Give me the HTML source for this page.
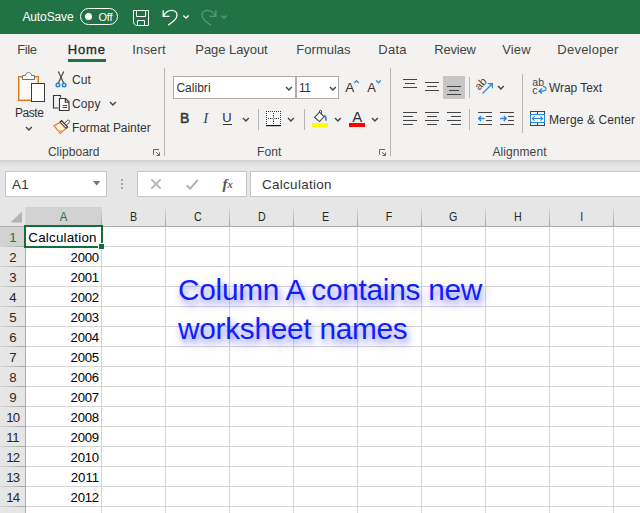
<!DOCTYPE html>
<html><head><meta charset="utf-8"><title>Excel</title>
<style>
*{box-sizing:border-box;margin:0;padding:0}
html,body{width:640px;height:513px;overflow:hidden;background:#fff}
body{position:relative;font-family:"Liberation Sans",sans-serif;color:#262626}
.abs{position:absolute}
.t{position:absolute;white-space:nowrap;line-height:1;height:1em}
.big{text-shadow:2px 4px 6px rgba(100,100,255,.55),2px 6px 9px rgba(120,120,255,.38)}
.vsep{position:absolute;width:1px;background:#b7b5b3}
.box{position:absolute;background:#fff;border:1px solid #c6c6c6}
svg{position:absolute;overflow:visible}

#title{left:0;top:0;width:640px;height:34px;background:#217346}
#ribbon{left:0;top:34px;width:640px;height:126px;background:#f3f2f1}
#shadow{left:0;top:160px;width:640px;height:7px;background:linear-gradient(#cfcfcf,#dedede 45%,#e6e6e6)}
#fbar{left:0;top:167px;width:640px;height:40px;background:#e6e6e6}
#colhdr{left:0;top:207px;width:640px;height:19px;background:#e6e6e6}
#rowhdr{left:0;top:226px;width:25px;height:287px;background:#e6e6e6}
.gl{position:absolute;background:#d4d4d4}
.hl{position:absolute;background:#ababab}

</style></head><body>
<div id="title" class="abs"></div><div id="ribbon" class="abs"></div><div id="shadow" class="abs"></div><div id="fbar" class="abs"></div>
<div id="colhdr" class="abs"></div><div id="rowhdr" class="abs"></div>
<div class="abs" style="left:26px;top:207px;width:75px;height:18px;background:#d2d2d2"></div>
<div class="abs" style="left:0;top:227px;width:24px;height:19px;background:#d2d2d2"></div>
<div class="gl" style="left:101px;top:227px;width:1px;height:286px"></div>
<div class="abs" style="left:101px;top:207px;width:1px;height:19px;background:linear-gradient(#dcdcdc,#a2a2a2)"></div>
<div class="gl" style="left:165px;top:227px;width:1px;height:286px"></div>
<div class="abs" style="left:165px;top:207px;width:1px;height:19px;background:linear-gradient(#dcdcdc,#a2a2a2)"></div>
<div class="gl" style="left:229px;top:227px;width:1px;height:286px"></div>
<div class="abs" style="left:229px;top:207px;width:1px;height:19px;background:linear-gradient(#dcdcdc,#a2a2a2)"></div>
<div class="gl" style="left:293px;top:227px;width:1px;height:286px"></div>
<div class="abs" style="left:293px;top:207px;width:1px;height:19px;background:linear-gradient(#dcdcdc,#a2a2a2)"></div>
<div class="gl" style="left:357px;top:227px;width:1px;height:286px"></div>
<div class="abs" style="left:357px;top:207px;width:1px;height:19px;background:linear-gradient(#dcdcdc,#a2a2a2)"></div>
<div class="gl" style="left:421px;top:227px;width:1px;height:286px"></div>
<div class="abs" style="left:421px;top:207px;width:1px;height:19px;background:linear-gradient(#dcdcdc,#a2a2a2)"></div>
<div class="gl" style="left:485px;top:227px;width:1px;height:286px"></div>
<div class="abs" style="left:485px;top:207px;width:1px;height:19px;background:linear-gradient(#dcdcdc,#a2a2a2)"></div>
<div class="gl" style="left:549px;top:227px;width:1px;height:286px"></div>
<div class="abs" style="left:549px;top:207px;width:1px;height:19px;background:linear-gradient(#dcdcdc,#a2a2a2)"></div>
<div class="gl" style="left:613px;top:227px;width:1px;height:286px"></div>
<div class="abs" style="left:613px;top:207px;width:1px;height:19px;background:linear-gradient(#dcdcdc,#a2a2a2)"></div>
<div class="gl" style="left:26px;top:226px;width:614px;height:1px"></div>
<div class="abs" style="left:0;top:226px;width:25px;height:1px;background:linear-gradient(to right,#d6d6d6,#a4a4a4)"></div>
<div class="gl" style="left:26px;top:246px;width:614px;height:1px"></div>
<div class="abs" style="left:0;top:246px;width:25px;height:1px;background:linear-gradient(to right,#d6d6d6,#a4a4a4)"></div>
<div class="gl" style="left:26px;top:266px;width:614px;height:1px"></div>
<div class="abs" style="left:0;top:266px;width:25px;height:1px;background:linear-gradient(to right,#d6d6d6,#a4a4a4)"></div>
<div class="gl" style="left:26px;top:286px;width:614px;height:1px"></div>
<div class="abs" style="left:0;top:286px;width:25px;height:1px;background:linear-gradient(to right,#d6d6d6,#a4a4a4)"></div>
<div class="gl" style="left:26px;top:306px;width:614px;height:1px"></div>
<div class="abs" style="left:0;top:306px;width:25px;height:1px;background:linear-gradient(to right,#d6d6d6,#a4a4a4)"></div>
<div class="gl" style="left:26px;top:326px;width:614px;height:1px"></div>
<div class="abs" style="left:0;top:326px;width:25px;height:1px;background:linear-gradient(to right,#d6d6d6,#a4a4a4)"></div>
<div class="gl" style="left:26px;top:346px;width:614px;height:1px"></div>
<div class="abs" style="left:0;top:346px;width:25px;height:1px;background:linear-gradient(to right,#d6d6d6,#a4a4a4)"></div>
<div class="gl" style="left:26px;top:366px;width:614px;height:1px"></div>
<div class="abs" style="left:0;top:366px;width:25px;height:1px;background:linear-gradient(to right,#d6d6d6,#a4a4a4)"></div>
<div class="gl" style="left:26px;top:386px;width:614px;height:1px"></div>
<div class="abs" style="left:0;top:386px;width:25px;height:1px;background:linear-gradient(to right,#d6d6d6,#a4a4a4)"></div>
<div class="gl" style="left:26px;top:406px;width:614px;height:1px"></div>
<div class="abs" style="left:0;top:406px;width:25px;height:1px;background:linear-gradient(to right,#d6d6d6,#a4a4a4)"></div>
<div class="gl" style="left:26px;top:426px;width:614px;height:1px"></div>
<div class="abs" style="left:0;top:426px;width:25px;height:1px;background:linear-gradient(to right,#d6d6d6,#a4a4a4)"></div>
<div class="gl" style="left:26px;top:446px;width:614px;height:1px"></div>
<div class="abs" style="left:0;top:446px;width:25px;height:1px;background:linear-gradient(to right,#d6d6d6,#a4a4a4)"></div>
<div class="gl" style="left:26px;top:466px;width:614px;height:1px"></div>
<div class="abs" style="left:0;top:466px;width:25px;height:1px;background:linear-gradient(to right,#d6d6d6,#a4a4a4)"></div>
<div class="gl" style="left:26px;top:486px;width:614px;height:1px"></div>
<div class="abs" style="left:0;top:486px;width:25px;height:1px;background:linear-gradient(to right,#d6d6d6,#a4a4a4)"></div>
<div class="gl" style="left:26px;top:506px;width:614px;height:1px"></div>
<div class="abs" style="left:0;top:506px;width:25px;height:1px;background:linear-gradient(to right,#d6d6d6,#a4a4a4)"></div>
<div class="hl" style="left:25px;top:226px;width:1px;height:287px"></div><div class="abs" style="left:25px;top:207px;width:1px;height:19px;background:#dcdcdc"></div>
<div class="hl" style="left:0;top:226px;width:640px;height:1px"></div>
<svg style="left:10px;top:211px" width="13" height="12"><path d="M12 0.5V11.5H0.5Z" fill="#b4b4b4"/></svg>
<div class="abs" style="left:24px;top:225px;width:79px;height:23px;border:2px solid #126e3c"></div>
<div class="abs" style="left:98px;top:243px;width:7px;height:7px;background:#fff"></div>
<div class="abs" style="left:99px;top:244px;width:5px;height:5px;background:#126e3c"></div>
<div class="abs" style="left:68px;top:59px;width:38px;height:3px;background:#217346"></div>
<div class="vsep" style="left:164px;top:68px;height:88px"></div>
<div class="vsep" style="left:390px;top:68px;height:88px"></div>
<div class="vsep" style="left:258px;top:109px;height:21px"></div>
<div class="vsep" style="left:304px;top:109px;height:21px"></div>
<div class="vsep" style="left:469px;top:77px;height:21px"></div>
<div class="vsep" style="left:469px;top:109px;height:21px"></div>
<div class="vsep" style="left:522px;top:74px;height:59px"></div>
<div class="box" style="left:173px;top:76px;width:123px;height:23px;border-color:#b0aeac"></div>
<div class="box" style="left:296px;top:76px;width:43px;height:23px;border-color:#b0aeac"></div>
<div class="abs" style="left:443px;top:76px;width:22px;height:23px;background:#c8c6c4"></div>
<div class="box" style="left:5px;top:171px;width:102px;height:26px"></div>
<div class="box" style="left:137px;top:171px;width:110px;height:26px"></div>
<div class="box" style="left:250px;top:171px;width:400px;height:26px"></div>
<span class="t" style="left:22.40px;top:11.14px;font-size:12px;color:#fff;letter-spacing:-0.106px;">AutoSave</span>
<span class="t" style="left:98.45px;top:11.63px;font-size:11px;color:#fff;letter-spacing:-0.128px;">Off</span>
<span class="t" style="left:17.35px;top:43.15px;font-size:13px;color:#444;letter-spacing:-0.413px;">File</span>
<span class="t" style="left:67.85px;top:43.15px;font-size:13px;color:#262626;letter-spacing:0.778px;-webkit-text-stroke:0.3px #262626;">Home</span>
<span class="t" style="left:132.35px;top:43.15px;font-size:13px;color:#444;letter-spacing:0.131px;">Insert</span>
<span class="t" style="left:195.35px;top:43.15px;font-size:13px;color:#444;letter-spacing:-0.065px;">Page Layout</span>
<span class="t" style="left:296.35px;top:43.15px;font-size:13px;color:#444;letter-spacing:0.014px;">Formulas</span>
<span class="t" style="left:378.35px;top:43.15px;font-size:13px;color:#444;letter-spacing:0.208px;">Data</span>
<span class="t" style="left:434.35px;top:43.15px;font-size:13px;color:#444;letter-spacing:-0.221px;">Review</span>
<span class="t" style="left:502.35px;top:43.15px;font-size:13px;color:#444;letter-spacing:0.087px;">View</span>
<span class="t" style="left:557.35px;top:43.15px;font-size:13px;color:#444;letter-spacing:0.226px;">Developer</span>
<span class="t" style="left:14.90px;top:107.14px;font-size:12px;color:#333;letter-spacing:-0.398px;">Paste</span>
<span class="t" style="left:71.90px;top:74.14px;font-size:12px;color:#333;letter-spacing:0.171px;">Cut</span>
<span class="t" style="left:71.90px;top:98.14px;font-size:12px;color:#333;letter-spacing:0.171px;">Copy</span>
<span class="t" style="left:71.90px;top:122.14px;font-size:12px;color:#333;letter-spacing:-0.047px;">Format Painter</span>
<span class="t" style="left:47.90px;top:145.64px;font-size:12px;color:#444;letter-spacing:0.036px;">Clipboard</span>
<span class="t" style="left:256.90px;top:145.64px;font-size:12px;color:#444;letter-spacing:0.171px;">Font</span>
<span class="t" style="left:492.40px;top:145.64px;font-size:12px;color:#444;letter-spacing:0.092px;">Alignment</span>
<span class="t" style="left:548.90px;top:82.14px;font-size:12px;color:#333;letter-spacing:-0.042px;">Wrap Text</span>
<span class="t" style="left:548.90px;top:114.14px;font-size:12px;color:#333;letter-spacing:0.107px;">Merge &amp; Center</span>
<span class="t" style="left:176.40px;top:82.14px;font-size:12px;color:#333;letter-spacing:0.026px;">Calibri</span>
<span class="t" style="left:298.90px;top:82.14px;font-size:12px;color:#333;letter-spacing:-0.384px;">11</span>
<span class="t" style="left:180.10px;top:111.16px;font-size:14px;color:#3b3b3b;-webkit-text-stroke:0.55px #3b3b3b;">B</span>
<span class="t" style="left:203.25px;top:110.67px;font-size:15px;color:#444;font-family:'Liberation Serif',serif;font-style:italic;">I</span>
<span class="t" style="left:222.35px;top:111.45px;font-size:13px;color:#333;">U</span>
<span class="t" style="left:345.32px;top:80.61px;font-size:13.5px;color:#333;">A</span>
<span class="t" style="left:367.35px;top:81.15px;font-size:13px;color:#333;">A</span>
<span class="t" style="left:352.25px;top:108.97px;font-size:15px;color:#333;">A</span>
<span class="t" style="left:12.03px;top:178.45px;font-size:13.4px;color:#333;letter-spacing:0.225px;">A1</span>
<span class="t" style="left:262.03px;top:178.45px;font-size:13.4px;color:#333;letter-spacing:0.326px;">Calculation</span>
<span class="t" style="left:129.03px;top:209.95px;font-size:13.4px;color:#262626;transform:scaleX(.8);">B</span>
<span class="t" style="left:192.66px;top:209.95px;font-size:13.4px;color:#262626;transform:scaleX(.8);">C</span>
<span class="t" style="left:256.66px;top:209.95px;font-size:13.4px;color:#262626;transform:scaleX(.8);">D</span>
<span class="t" style="left:321.03px;top:209.95px;font-size:13.4px;color:#262626;transform:scaleX(.8);">E</span>
<span class="t" style="left:385.41px;top:209.95px;font-size:13.4px;color:#262626;transform:scaleX(.8);">F</span>
<span class="t" style="left:448.29px;top:209.95px;font-size:13.4px;color:#262626;transform:scaleX(.8);">G</span>
<span class="t" style="left:512.66px;top:209.95px;font-size:13.4px;color:#262626;transform:scaleX(.8);">H</span>
<span class="t" style="left:579.63px;top:209.95px;font-size:13.4px;color:#262626;transform:scaleX(.8);">I</span>
<span class="t" style="left:59.03px;top:209.95px;font-size:13.4px;color:#217346;transform:scaleX(.85);">A</span>
<span class="t" style="left:9.13px;top:231.05px;font-size:13.2px;color:#217346;">1</span>
<span class="t" style="left:9.13px;top:251.05px;font-size:13.2px;color:#262626;">2</span>
<span class="t" style="left:9.13px;top:271.05px;font-size:13.2px;color:#262626;">3</span>
<span class="t" style="left:9.13px;top:291.05px;font-size:13.2px;color:#262626;">4</span>
<span class="t" style="left:9.13px;top:311.05px;font-size:13.2px;color:#262626;">5</span>
<span class="t" style="left:9.13px;top:331.05px;font-size:13.2px;color:#262626;">6</span>
<span class="t" style="left:9.13px;top:351.05px;font-size:13.2px;color:#262626;">7</span>
<span class="t" style="left:9.13px;top:371.05px;font-size:13.2px;color:#262626;">8</span>
<span class="t" style="left:9.13px;top:391.05px;font-size:13.2px;color:#262626;">9</span>
<span class="t" style="left:6.34px;top:411.05px;font-size:13.2px;color:#262626;letter-spacing:-0.876px;">10</span>
<span class="t" style="left:6.34px;top:431.05px;font-size:13.2px;color:#262626;letter-spacing:-0.392px;">11</span>
<span class="t" style="left:6.34px;top:451.05px;font-size:13.2px;color:#262626;letter-spacing:-0.876px;">12</span>
<span class="t" style="left:6.34px;top:471.05px;font-size:13.2px;color:#262626;letter-spacing:-0.876px;">13</span>
<span class="t" style="left:6.34px;top:491.05px;font-size:13.2px;color:#262626;letter-spacing:-0.876px;">14</span>
<span class="t" style="left:28.33px;top:230.95px;font-size:13.4px;color:#000;letter-spacing:0.190px;">Calculation</span>
<span class="t" style="left:70.55px;top:251.05px;font-size:13.2px;color:#000;letter-spacing:-0.256px;">2000</span>
<span class="t" style="left:70.55px;top:271.05px;font-size:13.2px;color:#000;letter-spacing:-0.256px;">2001</span>
<span class="t" style="left:70.55px;top:291.05px;font-size:13.2px;color:#000;letter-spacing:-0.256px;">2002</span>
<span class="t" style="left:70.55px;top:311.05px;font-size:13.2px;color:#000;letter-spacing:-0.256px;">2003</span>
<span class="t" style="left:70.55px;top:331.05px;font-size:13.2px;color:#000;letter-spacing:-0.256px;">2004</span>
<span class="t" style="left:70.55px;top:351.05px;font-size:13.2px;color:#000;letter-spacing:-0.256px;">2005</span>
<span class="t" style="left:70.55px;top:371.05px;font-size:13.2px;color:#000;letter-spacing:-0.256px;">2006</span>
<span class="t" style="left:70.55px;top:391.05px;font-size:13.2px;color:#000;letter-spacing:-0.256px;">2007</span>
<span class="t" style="left:70.55px;top:411.05px;font-size:13.2px;color:#000;letter-spacing:-0.256px;">2008</span>
<span class="t" style="left:70.55px;top:431.05px;font-size:13.2px;color:#000;letter-spacing:-0.256px;">2009</span>
<span class="t" style="left:70.55px;top:451.05px;font-size:13.2px;color:#000;letter-spacing:-0.256px;">2010</span>
<span class="t" style="left:70.80px;top:471.05px;font-size:13.2px;color:#000;letter-spacing:-0.010px;">2011</span>
<span class="t" style="left:70.55px;top:491.05px;font-size:13.2px;color:#000;letter-spacing:-0.256px;">2012</span>
<span class="t big" style="left:178.01px;top:274.74px;font-size:29.8px;color:#1020fa;letter-spacing:-0.275px;">Column A contains new</span>
<span class="t big" style="left:178.01px;top:313.74px;font-size:29.8px;color:#1020fa;letter-spacing:-0.269px;">worksheet names</span>
<div class="abs" style="left:80px;top:8px;width:38px;height:17px;border:1px solid #fff;border-radius:9px"></div>
<div class="abs" style="left:84.5px;top:13px;width:7px;height:7px;border-radius:50%;background:#fff"></div>
<svg style="left:133px;top:10px" width="16" height="16" fill="none" stroke="#fff" stroke-width="1"><path d="M0.5 0.5H15.5V15.5H3L0.5 13Z"/><path d="M3.5 0.5V6.5H12.5V0.5"/><path d="M4.5 15.5V10.5H11.5V15.5"/></svg>
<svg style="left:162px;top:9px" width="16" height="17" fill="none" stroke="#fff" stroke-width="1.3"><path d="M1.2 1.2V7.4H7.6"/><path d="M1.6 7C3.2 3.6 6.3 1.3 9.8 1.3C13 1.3 15 3.6 15 6.4C15 8.6 13.8 10 12.2 11.4L6.2 16.3"/></svg>
<svg style="left:182.5px;top:14.5px" width="6" height="4" fill="none" stroke="#fff" stroke-width="1.4"><path d="M0.3 0.5L3 3.1L5.7 0.5"/></svg>
<svg style="left:200.5px;top:9px" width="16" height="17" fill="none" stroke="#5b9a79" stroke-width="1.3"><g transform="translate(16,0) scale(-1,1)"><path d="M1.2 1.2V7.4H7.6"/><path d="M1.6 7C3.2 3.6 6.3 1.3 9.8 1.3C13 1.3 15 3.6 15 6.4C15 8.6 13.8 10 12.2 11.4L6.2 16.3"/></g></svg>
<svg style="left:221px;top:14.5px" width="6" height="4" fill="none" stroke="#5b9a79" stroke-width="1.4"><path d="M0.3 0.5L3 3.1L5.7 0.5"/></svg>
<svg style="left:25.80px;top:127.00px" width="5.8" height="3" fill="none" stroke="#444" stroke-width="1.4"><path d="M0 0L2.9 3L5.8 0"/></svg>
<svg style="left:110.40px;top:102.00px" width="5.8" height="3" fill="none" stroke="#444" stroke-width="1.4"><path d="M0 0L2.9 3L5.8 0"/></svg>
<svg style="left:286.40px;top:86.80px" width="5.8" height="3" fill="none" stroke="#444" stroke-width="1.4"><path d="M0 0L2.9 3L5.8 0"/></svg>
<svg style="left:329.60px;top:86.80px" width="5.8" height="3" fill="none" stroke="#444" stroke-width="1.4"><path d="M0 0L2.9 3L5.8 0"/></svg>
<svg style="left:242.60px;top:117.80px" width="5.8" height="3" fill="none" stroke="#444" stroke-width="1.4"><path d="M0 0L2.9 3L5.8 0"/></svg>
<svg style="left:288.30px;top:117.80px" width="5.8" height="3" fill="none" stroke="#444" stroke-width="1.4"><path d="M0 0L2.9 3L5.8 0"/></svg>
<svg style="left:334.60px;top:117.80px" width="5.8" height="3" fill="none" stroke="#444" stroke-width="1.4"><path d="M0 0L2.9 3L5.8 0"/></svg>
<svg style="left:371.60px;top:117.80px" width="5.8" height="3" fill="none" stroke="#444" stroke-width="1.4"><path d="M0 0L2.9 3L5.8 0"/></svg>
<svg style="left:497.60px;top:85.80px" width="5.8" height="3" fill="none" stroke="#444" stroke-width="1.4"><path d="M0 0L2.9 3L5.8 0"/></svg>
<svg style="left:18px;top:72px" width="28" height="30">
<rect x="0.5" y="4.5" width="20" height="24" fill="#faf9f8" stroke="#e07a14" stroke-width="1"/>
<rect x="1.5" y="5.5" width="18" height="22" fill="none" stroke="#f3bd7c" stroke-width="1"/>
<path d="M4.5 7.5V3.5H7.3C7.6 1.6 9 0.5 10.5 0.5C12 0.5 13.4 1.6 13.7 3.5H16.5V7.5Z" fill="#fff" stroke="#6e6e6e" stroke-width="1"/>
<rect x="13.5" y="11.5" width="13" height="18" fill="#fff" stroke="#3b3b3b" stroke-width="1"/>
</svg>
<svg style="left:55px;top:71px" width="12" height="17" fill="none">
<path d="M3.3 0.4L8.6 12M8.7 0.4L3.4 12" stroke="#484848" stroke-width="1.2"/>
<circle cx="2.9" cy="14" r="1.75" stroke="#1e8ad6" stroke-width="1.5"/><circle cx="9.1" cy="14" r="1.75" stroke="#1e8ad6" stroke-width="1.5"/>
</svg>
<svg style="left:52.5px;top:95px" width="17" height="16" fill="none" stroke="#333" stroke-width="1.15">
<path d="M5.5 13H0.5V0.5H7.5V2.5"/>
<path d="M6.5 3.5H12.5L16 7V15.5H6.5Z" fill="#fff"/><path d="M12.3 3.7V7.2H15.8"/>
<path d="M9.5 10.5H14M9.5 12.5H14" stroke="#444" stroke-width="1"/>
</svg>
<svg style="left:53px;top:119px" width="17" height="16" fill="none">
<path d="M10.6 5.4L14.2 1.6C14.8 1 15.8 1 16.3 1.6C16.8 2.2 16.7 3 16.1 3.6L12.4 7.2" stroke="#444" stroke-width="1" fill="#fff"/>
<path d="M6.9 3.3L8.6 1.7L14.6 7.9L12.9 9.5Z" fill="#fff" stroke="#333" stroke-width="1.25"/>
<path d="M6.7 3.6L0.9 6.7L7.3 14.4L12.6 9.7Z" fill="#fff8ef" stroke="#e8801a" stroke-width="1.2" stroke-linejoin="round"/>
<path d="M4.2 10.8L7.3 14L10.4 11.4Z" fill="#f5b45a"/>
</svg>
<svg style="left:153px;top:149px" width="8" height="8" fill="none" stroke="#666" stroke-width="1"><path d="M0.5 5.6V0.5H6"/><path d="M3 3L6.3 6.3M6.5 3.4V6.5H3.4"/></svg>
<svg style="left:379px;top:149px" width="8" height="8" fill="none" stroke="#666" stroke-width="1"><path d="M0.5 5.6V0.5H6"/><path d="M3 3L6.3 6.3M6.5 3.4V6.5H3.4"/></svg>
<div class="abs" style="left:223px;top:124px;width:9px;height:1px;background:#333"></div>
<svg style="left:266px;top:111px" width="16" height="16"><rect x="0" y="0" width="15" height="14" fill="#fbfbfb"/><g fill="#3a3a3a"><rect x="0" y="0" width="1" height="1"/><rect x="2" y="0" width="1" height="1"/><rect x="4" y="0" width="1" height="1"/><rect x="6" y="0" width="1" height="1"/><rect x="8" y="0" width="1" height="1"/><rect x="10" y="0" width="1" height="1"/><rect x="12" y="0" width="1" height="1"/><rect x="14" y="0" width="1" height="1"/><rect x="0" y="2" width="1" height="1"/><rect x="14" y="2" width="1" height="1"/><rect x="0" y="4" width="1" height="1"/><rect x="14" y="4" width="1" height="1"/><rect x="0" y="6" width="1" height="1"/><rect x="14" y="6" width="1" height="1"/><rect x="0" y="8" width="1" height="1"/><rect x="14" y="8" width="1" height="1"/><rect x="0" y="10" width="1" height="1"/><rect x="14" y="10" width="1" height="1"/><rect x="0" y="12" width="1" height="1"/><rect x="14" y="12" width="1" height="1"/><rect x="7" y="2" width="1" height="1"/><rect x="7" y="4" width="1" height="1"/><rect x="7" y="10" width="1" height="1"/><rect x="7" y="12" width="1" height="1"/><rect x="2" y="7" width="1" height="1"/><rect x="4" y="7" width="1" height="1"/><rect x="10" y="7" width="1" height="1"/><rect x="12" y="7" width="1" height="1"/><rect x="7" y="5.599999999999994" width="1" height="1"/><rect x="7" y="8.400000000000006" width="1" height="1"/><rect x="5.600000000000023" y="7" width="1" height="1"/><rect x="8.399999999999977" y="7" width="1" height="1"/></g><rect x="0" y="14" width="15" height="1.2" fill="#111"/></svg>
<svg style="left:312px;top:110px" width="17" height="18" fill="none">
<path d="M7.5 2.2L2.6 7.4L7.6 11.6L12 6.6Z" fill="#fff" stroke="#444" stroke-width="1.1"/>
<path d="M7.5 2.2V0.8C7.5 0.2 9.5 0.2 9.5 0.8V4" stroke="#444" stroke-width="1"/>
<path d="M12.2 5.4C13.8 6.6 14.4 8.6 13.6 10.8" stroke="#2b7cd3" stroke-width="1.6"/>
<rect x="0" y="13" width="16" height="4" fill="#ffff00"/></svg>
<div class="abs" style="left:349px;top:123px;width:16px;height:4px;background:#ff0000"></div>
<svg style="left:353.5px;top:79.5px" width="5" height="3.5" fill="none" stroke="#2b88d8" stroke-width="1.2"><path d="M0.3 3L2.5 0.7L4.7 3"/></svg>
<svg style="left:375.5px;top:79.5px" width="5" height="3.5" fill="none" stroke="#2b88d8" stroke-width="1.2"><path d="M0.3 0.5L2.5 2.8L4.7 0.5"/></svg>
<div class="abs" style="left:403.0px;top:79px;width:14px;height:1px;background:#444"></div><div class="abs" style="left:405.0px;top:83px;width:10px;height:1px;background:#444"></div><div class="abs" style="left:403.0px;top:87px;width:14px;height:1px;background:#444"></div>
<div class="abs" style="left:425.0px;top:82px;width:14px;height:1px;background:#444"></div><div class="abs" style="left:427.0px;top:86px;width:10px;height:1px;background:#444"></div><div class="abs" style="left:425.0px;top:90px;width:14px;height:1px;background:#444"></div>
<div class="abs" style="left:447.0px;top:86px;width:14px;height:1px;background:#444"></div><div class="abs" style="left:449.0px;top:90px;width:10px;height:1px;background:#444"></div><div class="abs" style="left:447.0px;top:94px;width:14px;height:1px;background:#444"></div>
<div class="abs" style="left:403px;top:112px;width:14px;height:1px;background:#444"></div><div class="abs" style="left:403px;top:116px;width:10px;height:1px;background:#444"></div><div class="abs" style="left:403px;top:120px;width:14px;height:1px;background:#444"></div><div class="abs" style="left:403px;top:124px;width:10px;height:1px;background:#444"></div>
<div class="abs" style="left:425.0px;top:112px;width:14px;height:1px;background:#444"></div><div class="abs" style="left:427.0px;top:116px;width:10px;height:1px;background:#444"></div><div class="abs" style="left:425.0px;top:120px;width:14px;height:1px;background:#444"></div><div class="abs" style="left:427.0px;top:124px;width:10px;height:1px;background:#444"></div>
<div class="abs" style="left:447px;top:112px;width:14px;height:1px;background:#444"></div><div class="abs" style="left:451px;top:116px;width:10px;height:1px;background:#444"></div><div class="abs" style="left:447px;top:120px;width:14px;height:1px;background:#444"></div><div class="abs" style="left:451px;top:124px;width:10px;height:1px;background:#444"></div>
<div class="abs" style="left:478px;top:112px;width:14px;height:1px;background:#444"></div><div class="abs" style="left:478px;top:124px;width:14px;height:1px;background:#444"></div>
<div class="abs" style="left:486px;top:116px;width:6px;height:1px;background:#444"></div><div class="abs" style="left:486px;top:120px;width:6px;height:1px;background:#444"></div>
<svg style="left:478px;top:115px" width="7" height="7" fill="none" stroke="#2b88d8" stroke-width="1.4"><path d="M6.5 3.5H0.8M3 1L0.6 3.5L3 6"/></svg>
<div class="abs" style="left:500px;top:112px;width:14px;height:1px;background:#444"></div><div class="abs" style="left:500px;top:124px;width:14px;height:1px;background:#444"></div>
<div class="abs" style="left:508px;top:116px;width:6px;height:1px;background:#444"></div><div class="abs" style="left:508px;top:120px;width:6px;height:1px;background:#444"></div>
<svg style="left:500px;top:115px" width="7" height="7" fill="none" stroke="#2b88d8" stroke-width="1.4"><path d="M0.2 3.5H6M3.8 1L6.2 3.5L3.8 6"/></svg>
<svg style="left:477px;top:79px" width="16" height="16" fill="none">
<text x="-2" y="8.8" font-size="11" fill="#444" stroke="none" transform="rotate(-47 3.5 5.5)" font-family="Liberation Sans,sans-serif">ab</text>
<path d="M5.5 14.5L15 5M10.8 4.6H15.4V9.2" stroke="#2b88d8" stroke-width="1.2"/></svg>
<svg style="left:532px;top:78px" width="16" height="17" fill="none">
<text x="0.3" y="8" font-size="10.5" fill="#444" font-family="Liberation Sans,sans-serif">ab</text>
<text x="0.3" y="16" font-size="10.5" fill="#444" font-family="Liberation Sans,sans-serif">c</text>
<path d="M11 8.6C13.4 8.6 14.6 10.2 13.8 11.8C13 13.2 11 13.4 7.4 13.2M10 10.6L7 13.2L10 15.6" stroke="#2b88d8" stroke-width="1.3"/></svg>
<svg style="left:530px;top:111px" width="16" height="16" fill="none">
<rect x="0.5" y="0.5" width="14" height="14" stroke="#444"/><path d="M0.5 3.5H14.5M0.5 11.5H14.5M7.5 0.5V3.5M7.5 11.5V14.5" stroke="#444"/>
<rect x="0.5" y="3.5" width="14" height="8" fill="#fff" stroke="#2b88d8"/>
<path d="M2.5 7.5H12.5M4.6 5.4L2.4 7.5L4.6 9.6M10.4 5.4L12.6 7.5L10.4 9.6" stroke="#2b88d8" stroke-width="1.2"/></svg>
<svg style="left:93px;top:181px" width="8" height="5"><path d="M0 0H7.4L3.7 4.4Z" fill="#777"/></svg>
<div class="abs" style="left:121px;top:179px;width:2px;height:2px;background:#a3a3a3"></div>
<div class="abs" style="left:121px;top:183px;width:2px;height:2px;background:#a3a3a3"></div>
<div class="abs" style="left:121px;top:187px;width:2px;height:2px;background:#a3a3a3"></div>
<svg style="left:151px;top:179.3px" width="10" height="10" fill="none" stroke="#b0b0b0" stroke-width="1.6"><path d="M0.4 0.4L9.6 9.6M9.6 0.4L0.4 9.6"/></svg>
<svg style="left:186px;top:179px" width="12.5" height="11" fill="none" stroke="#b0b0b0" stroke-width="1.9"><path d="M0.6 6.2L4.2 9.6L11.8 0.8"/></svg>
<span class="t" style="left:222.5px;top:176.5px;font-size:15px;color:#555;font-weight:700;font-family:'Liberation Serif',serif;font-style:italic">f</span>
<span class="t" style="left:227.6px;top:179.6px;font-size:10.5px;color:#555;font-weight:700;font-family:'Liberation Serif',serif;font-style:italic">x</span>
</body></html>
